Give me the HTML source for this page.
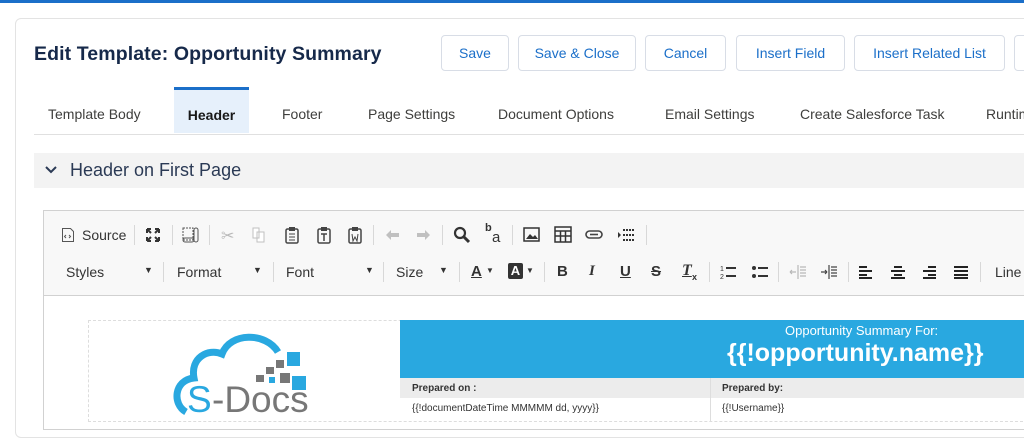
<!DOCTYPE html>
<html><head><meta charset="utf-8"><style>
*{margin:0;padding:0;box-sizing:border-box}
body{width:1024px;height:422px;overflow:hidden;background:#fff;font-family:"Liberation Sans",Arial,sans-serif;position:relative}
.a{position:absolute}
.topbar{left:0;top:0;width:1024px;height:3px;background:#1b6fc9}
.card{left:15px;top:18px;width:1030px;height:420px;border:1px solid #e3e3e3;border-radius:6px;background:#fff}
.title{left:34px;top:43px;font-size:19.5px;font-weight:bold;color:#16294a;letter-spacing:0.1px}
.btn{top:35px;height:36px;border:1px solid #d8dde6;border-radius:4px;color:#1b6fc9;font-size:14px;display:flex;align-items:center;justify-content:center;background:#fff}
.tab{top:106px;font-size:14px;color:#3e3e3c}
.hdrtab{left:174px;top:87px;width:75px;height:46px;background:#e6f0fb;border-top:3px solid #1b6fc9;font-weight:bold;color:#181818;font-size:14px;text-align:center;padding-top:17px}
.div{left:34px;top:134px;width:1000px;height:1px;background:#e0e0e0}
.sec{left:34px;top:153px;width:1000px;height:35px;background:#f3f3f3}
.sect{left:70px;top:160px;font-size:18px;color:#2b3a55}
.ed{left:43px;top:210px;width:990px;height:220px;border:1px solid #d1d1d1;background:#fff}
.tb{left:44px;top:211px;width:990px;height:85px;background:#f8f8f8;border-bottom:1px solid #d1d1d1}
.t{font-size:14px;color:#333}
.sep{width:1px;height:20px;background:#d8d8d8}
.ic{color:#444;font-size:14px}
.g{color:#b8b8b8}
.cell{font-size:10px;color:#333}
</style></head><body>
<div class="a topbar"></div>
<div class="a card"></div>
<div class="a title">Edit Template: Opportunity Summary</div>
<div class="a btn" style="left:441px;width:68px">Save</div>
<div class="a btn" style="left:518px;width:118px">Save &amp; Close</div>
<div class="a btn" style="left:645px;width:81px">Cancel</div>
<div class="a btn" style="left:736px;width:109px">Insert Field</div>
<div class="a btn" style="left:854px;width:151px">Insert Related List</div>
<div class="a btn" style="left:1014px;width:40px"></div>

<div class="a tab" style="left:48px">Template Body</div>
<div class="a hdrtab">Header</div>
<div class="a tab" style="left:282px">Footer</div>
<div class="a tab" style="left:368px">Page Settings</div>
<div class="a tab" style="left:498px">Document Options</div>
<div class="a tab" style="left:665px">Email Settings</div>
<div class="a tab" style="left:800px">Create Salesforce Task</div>
<div class="a tab" style="left:986px">Runtime</div>
<div class="a div"></div>

<div class="a sec"></div>
<svg class="a" style="left:44px;top:165px" width="14" height="10"><path d="M2 2 L7 7 L12 2" stroke="#2b3a55" stroke-width="2" fill="none"/></svg>
<div class="a sect">Header on First Page</div>

<div class="a ed"></div>
<div class="a tb"></div>
<!-- row 1 -->
<svg class="a" style="left:61px;top:227px" width="14" height="16"><path d="M1.5 1.5h8l3 3v10h-11z" stroke="#555" fill="none"/><path d="M5 8l-1.5 1.5L5 11M8 8l1.5 1.5L8 11" stroke="#555" fill="none"/></svg>
<div class="a t" style="left:82px;top:227px">Source</div>
<div class="a sep" style="left:134px;top:225px"></div>
<svg class="a" style="left:145px;top:227px" width="16" height="16"><path d="M2 2l4 4M2 2h4M2 2v4M14 2l-4 4M14 2h-4M14 2v4M2 14l4-4M2 14h4M2 14v-4M14 14l-4-4M14 14h-4M14 14v-4" stroke="#333" stroke-width="2" fill="none"/></svg>
<div class="a sep" style="left:172px;top:225px"></div>
<svg class="a" style="left:181px;top:226px" width="20" height="18"><rect x="2" y="2" width="10" height="12" stroke="#555" fill="none" stroke-dasharray="2 1"/><rect x="13" y="2" width="4" height="14" rx="2" stroke="#555" fill="none"/><rect x="2" y="12" width="11" height="4" rx="2" stroke="#555" fill="none"/></svg>
<div class="a sep" style="left:209px;top:225px"></div>
<div class="a ic g" style="left:221px;top:226px;font-size:16px">✂</div>
<svg class="a" style="left:251px;top:226px" width="16" height="18"><path d="M2 2h6v10H2zM6 6h7v10H6z" stroke="#c0c0c0" fill="#fff"/></svg>
<svg class="a" style="left:284px;top:226px" width="16" height="18"><rect x="2" y="3" width="12" height="14" rx="1.5" stroke="#444" stroke-width="1.5" fill="none"/><rect x="5" y="1" width="6" height="4" fill="#444"/><path d="M5 8h6M5 11h6M5 14h6" stroke="#444"/></svg>
<svg class="a" style="left:316px;top:226px" width="16" height="18"><rect x="2" y="3" width="12" height="14" rx="1.5" stroke="#444" stroke-width="1.5" fill="none"/><rect x="5" y="1" width="6" height="4" fill="#444"/><path d="M5 8h6M8 8v7" stroke="#444" stroke-width="1.5"/></svg>
<svg class="a" style="left:347px;top:226px" width="16" height="18"><rect x="2" y="3" width="12" height="14" rx="1.5" stroke="#444" stroke-width="1.5" fill="none"/><rect x="5" y="1" width="6" height="4" fill="#444"/><path d="M5 8l1 7 2-4 2 4 1-7" stroke="#444" fill="none"/></svg>
<div class="a sep" style="left:373px;top:225px"></div>
<svg class="a" style="left:384px;top:228px" width="18" height="14"><path d="M2 7l5-5v3h8v4H7v3z" fill="#c0c0c0"/></svg>
<svg class="a" style="left:414px;top:228px" width="18" height="14"><path d="M16 7l-5-5v3H3v4h8v3z" fill="#c0c0c0"/></svg>
<div class="a sep" style="left:442px;top:225px"></div>
<svg class="a" style="left:453px;top:226px" width="18" height="18"><circle cx="7" cy="7" r="5" stroke="#333" stroke-width="2.2" fill="none"/><path d="M11 11l5 5" stroke="#333" stroke-width="3"/></svg>
<div class="a" style="left:485px;top:222px;font-size:11px;color:#333;font-weight:bold">b</div>
<div class="a" style="left:492px;top:229px;font-size:15px;color:#333">a</div>
<div class="a sep" style="left:512px;top:225px"></div>
<svg class="a" style="left:523px;top:227px" width="18" height="16"><rect x="1" y="1" width="15" height="13" stroke="#333" stroke-width="1.5" fill="none"/><path d="M3 12l4-5 3 3 2-2 3 4z" fill="#333"/></svg>
<svg class="a" style="left:554px;top:226px" width="18" height="18"><rect x="1" y="1" width="16" height="15" stroke="#333" stroke-width="1.5" fill="none"/><path d="M1 5h16M1 10h16M6.5 5v11M11.5 5v11" stroke="#333" stroke-width="1.5"/></svg>
<svg class="a" style="left:585px;top:229px" width="18" height="12"><rect x="1" y="2" width="16" height="7" rx="3.5" stroke="#444" stroke-width="1.6" fill="none"/><path d="M5 5.5h8" stroke="#444" stroke-width="1.6"/></svg>
<svg class="a" style="left:616px;top:227px" width="20" height="16"><path d="M2 5l3 3-3 3z" fill="#333"/><path d="M7 3h11M7 8h11M7 13h11" stroke="#333" stroke-width="2" stroke-dasharray="2 1"/></svg>
<div class="a sep" style="left:646px;top:225px"></div>
<!-- row 2 -->
<div class="a t" style="left:66px;top:264px">Styles</div><div class="a" style="left:144px;top:265px;font-size:9px;color:#333">▼</div>
<div class="a sep" style="left:163px;top:262px"></div>
<div class="a t" style="left:177px;top:264px">Format</div><div class="a" style="left:253px;top:265px;font-size:9px;color:#333">▼</div>
<div class="a sep" style="left:273px;top:262px"></div>
<div class="a t" style="left:286px;top:264px">Font</div><div class="a" style="left:365px;top:265px;font-size:9px;color:#333">▼</div>
<div class="a sep" style="left:383px;top:262px"></div>
<div class="a t" style="left:396px;top:264px">Size</div><div class="a" style="left:439px;top:265px;font-size:9px;color:#333">▼</div>
<div class="a sep" style="left:459px;top:262px"></div>
<div class="a" style="left:471px;top:263px;font-size:15px;font-weight:bold;color:#333;text-decoration:underline">A</div><div class="a" style="left:486px;top:266px;font-size:8px;color:#333">▼</div>
<div class="a" style="left:508px;top:263px;width:15px;height:16px;background:#333;color:#fff;font-size:13px;font-weight:bold;text-align:center;border-radius:2px">A</div><div class="a" style="left:526px;top:266px;font-size:8px;color:#333">▼</div>
<div class="a sep" style="left:544px;top:262px"></div>
<div class="a" style="left:557px;top:263px;font-size:15px;font-weight:bold;color:#333">B</div>
<div class="a" style="left:589px;top:263px;font-size:15px;font-style:italic;font-weight:bold;font-family:'Liberation Serif',serif;color:#333">I</div>
<div class="a" style="left:620px;top:263px;font-size:15px;font-weight:bold;color:#333;text-decoration:underline">U</div>
<div class="a" style="left:651px;top:263px;font-size:15px;font-weight:bold;color:#333;text-decoration:line-through">S</div>
<div class="a" style="left:682px;top:262px;font-size:16px;font-style:italic;font-weight:bold;font-family:'Liberation Serif',serif;color:#333;text-decoration:underline">T</div><div class="a" style="left:692px;top:272px;font-size:9px;font-weight:bold;color:#333">x</div>
<div class="a sep" style="left:709px;top:262px"></div>
<svg class="a" style="left:720px;top:264px" width="18" height="16"><text x="0" y="7" font-size="7" fill="#333" font-family="Liberation Sans">1</text><text x="0" y="15" font-size="7" fill="#333" font-family="Liberation Sans">2</text><path d="M6 4h10M6 12h10" stroke="#333" stroke-width="2"/></svg>
<svg class="a" style="left:751px;top:264px" width="18" height="16"><circle cx="3" cy="4" r="2" fill="#333"/><circle cx="3" cy="12" r="2" fill="#333"/><path d="M7 4h10M7 12h10" stroke="#333" stroke-width="2"/></svg>
<div class="a sep" style="left:778px;top:262px"></div>
<svg class="a" style="left:789px;top:264px" width="18" height="16"><path d="M9 1v14M11 3h6M11 6h6M11 9h6M11 12h6M1 8h6M1 8l2-2M1 8l2 2" stroke="#b8b8b8" stroke-width="1.2" fill="none"/></svg>
<svg class="a" style="left:820px;top:264px" width="18" height="16"><path d="M9 1v14M11 3h6M11 6h6M11 9h6M11 12h6M1 8h6M7 8l-2-2M7 8l-2 2" stroke="#444" stroke-width="1.2" fill="none"/></svg>
<div class="a sep" style="left:848px;top:262px"></div>
<svg class="a" style="left:858px;top:265px" width="16" height="14"><path d="M1 2h8M1 6h13M1 10h8M1 13h13" stroke="#222" stroke-width="2"/></svg>
<svg class="a" style="left:890px;top:265px" width="16" height="14"><path d="M4 2h8M1 6h14M4 10h8M1 13h14" stroke="#222" stroke-width="2"/></svg>
<svg class="a" style="left:921px;top:265px" width="16" height="14"><path d="M7 2h8M2 6h13M7 10h8M2 13h13" stroke="#222" stroke-width="2"/></svg>
<svg class="a" style="left:953px;top:265px" width="16" height="14"><path d="M1 2h14M1 6h14M1 10h14M1 13h14" stroke="#222" stroke-width="2"/></svg>
<div class="a sep" style="left:980px;top:262px"></div>
<div class="a t" style="left:995px;top:264px">Line</div>

<!-- content table -->
<div class="a" style="left:88px;top:320px;width:940px;height:102px;border:1px dashed #ddd"></div>
<div class="a" style="left:400px;top:320px;width:624px;height:58px;background:#29a8e0"></div>
<div class="a" style="left:785px;top:323px;font-size:13px;color:#fff">Opportunity Summary For:</div>
<div class="a" style="left:727px;top:339px;font-size:25px;font-weight:bold;color:#fff">{{!opportunity.name}}</div>
<div class="a" style="left:400px;top:378px;width:624px;height:20px;background:#ececec"></div>
<div class="a" style="left:710px;top:378px;width:1px;height:44px;background:#ddd"></div>
<div class="a cell" style="left:412px;top:383px;font-weight:bold">Prepared on :</div>
<div class="a cell" style="left:722px;top:383px;font-weight:bold">Prepared by:</div>
<div class="a cell" style="left:412px;top:403px">{{!documentDateTime MMMMM dd, yyyy}}</div>
<div class="a cell" style="left:722px;top:403px">{{!Username}}</div>
<!-- logo -->
<svg class="a" style="left:170px;top:330px" width="150" height="92">
<path d="M16 82 C2 74 4 50 24 48 C20 28 38 18 52 24 C60 2 96 2 108 22" stroke="#29a8e0" stroke-width="7" fill="none"/>
<rect x="117" y="22" width="13" height="14" fill="#29a8e0"/>
<rect x="106" y="30" width="8" height="8" fill="#777"/>
<rect x="96" y="37" width="8" height="7" fill="#777"/>
<rect x="86" y="45" width="8" height="7" fill="#777"/>
<rect x="99" y="47" width="6" height="6" fill="#29a8e0"/>
<rect x="110" y="43" width="10" height="10" fill="#777"/>
<rect x="122" y="46" width="14" height="14" fill="#29a8e0"/>
<text x="17" y="82" font-family="Liberation Sans" font-size="37" fill="#29a8e0">S</text>
<text x="42" y="82" font-family="Liberation Sans" font-size="37" fill="#777">-Docs</text>
</svg>
</body></html>
